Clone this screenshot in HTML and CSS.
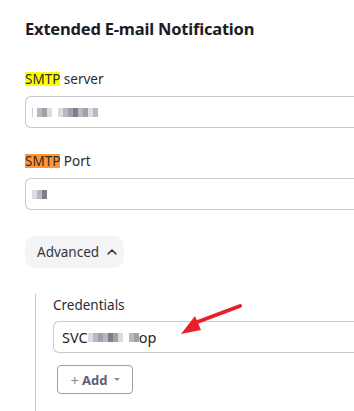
FILE: index.html
```html
<!DOCTYPE html>
<html>
<head>
<meta charset="utf-8">
<link rel="stylesheet" href="styles.css">
</head>
<body>
<div class="page">
  <h2 class="title">Extended E-mail Notification</h2>

  <div class="field">
    <div class="label"><span class="hl hl-yellow">SMTP</span> server</div>
    <div class="input">
      <span class="blur">
        <i class="line"></i><i class="c2"></i><i class="c3"></i><i class="c1"></i><i class="gap"></i><i class="c1"></i><i class="c2"></i><i class="c3"></i><i class="c4"></i><i class="c2"></i><i class="c3"></i><i class="c1"></i><i class="c2"></i>
      </span>
    </div>
  </div>

  <div class="field">
    <div class="label"><span class="hl hl-orange">SMTP</span> Port</div>
    <div class="input">
      <span class="blur">
        <i class="c1"></i><i class="c2"></i><i class="c4"></i>
      </span>
    </div>
  </div>

  <button class="adv">Advanced
    <svg class="chev" width="10" height="6" viewBox="0 0 10 6"><path d="M1 5 L5 1 L9 5" fill="none" stroke="#333" stroke-width="1.5" stroke-linecap="round" stroke-linejoin="round"/></svg>
  </button>

  <div class="nested">
    <div class="label">Credentials</div>
    <div class="input input-cred">SVC<span class="blur"><i class="c1"></i><i class="c2"></i><i class="c3"></i><i class="c2"></i><i class="c4"></i><i class="c3"></i><i class="c1"></i><i class="gap"></i><i class="c2"></i><i class="c3"></i></span>op</div>
    <button class="add"><span class="plus">+</span> Add <span class="caret"></span></button>
  </div>

  <svg class="arrow" width="80" height="40" viewBox="0 0 80 40">
    <path d="M70 7 L22 25" stroke="#e8202a" stroke-width="4" stroke-linecap="round" fill="none"/>
    <path d="M11 35 L25 17 L31 31 Z" fill="#e8202a"/>
  </svg>
</div>
</body>
</html>
```

FILE: styles.css
```css
html, body {
  margin: 0;
  padding: 0;
  overflow: hidden;
  background: #fff;
}
body {
  font-family: "Noto Sans", "Open Sans", sans-serif;
  color: #1f1f29;
}
.page {
  position: relative;
  padding: 17px 0 0 25px;
}
.title {
  margin: 0 0 28px 0;
  font-size: 16.5px;
  line-height: 24px;
  font-weight: 700;
  letter-spacing: -0.2px;
  color: #1c1c25;
}
.field {
  margin-bottom: 23px;
}
.label {
  font-size: 13.5px;
  line-height: 20px;
  color: #2b2b33;
  margin-bottom: 7px;
}
.hl {
  display: inline-block;
  line-height: 14px;
  height: 14px;
}
.hl-yellow { background: #ffff00; }
.hl-orange { background: #ff9632; }
.input {
  box-sizing: border-box;
  height: 32px;
  border: 1px solid #c5cbd2;
  border-right: 0;
  border-radius: 6px 0 0 6px;
  padding: 0 6px;
  display: flex;
  align-items: center;
  font-size: 13.5px;
  color: #222;
}
.input-cred {
  font-size: 14.5px;
  padding: 0 8px;
  color: #1f1f25;
}
.blur {
  display: inline-flex;
  align-items: center;
  height: 10px;
}
.blur i {
  display: inline-block;
  width: 5px;
  height: 9px;
}
.blur .line { width: 1px; background: #d0d0d4; margin-right: 4px; }
.blur .c1 { background: #dcdce0; }
.blur .c2 { background: #b8b8be; }
.blur .c3 { background: #a0a0a8; }
.blur .c4 { background: #7e7e86; }
.blur .gap { background: transparent; width: 6px; }
.adv {
  display: flex;
  align-items: center;
  gap: 8px;
  margin-top: 26px;
  height: 32px;
  width: 99px;
  box-sizing: border-box;
  padding: 0 0 0 12px;
  border: none;
  border-radius: 10px;
  background: #f4f4f6;
  font-family: inherit;
  font-size: 13.5px;
  color: #33333b;
}
.chev { margin-top: -1px; }
.nested {
  margin: 26px 0 0 10px;
  border-left: 1.5px solid #c8c8cc;
  padding: 1px 0 20px 17px;
}
.nested .label { margin-bottom: 6px; }
.add {
  margin: 12px 0 0 4px;
  height: 29px;
  width: 76px;
  box-sizing: border-box;
  border: 1px solid #9aa0aa;
  border-radius: 4px;
  background: #fff;
  font-family: inherit;
  font-size: 13px;
  font-weight: 700;
  color: #5d6078;
  display: flex;
  align-items: center;
  justify-content: center;
  gap: 3px;
}
.plus { font-weight: 400; color: #8a8c99; font-size: 15px; }
.caret {
  width: 0; height: 0;
  border-left: 3px solid transparent;
  border-right: 3px solid transparent;
  border-top: 3px solid #8a8c99;
  margin-left: 3px;
}
.arrow {
  position: absolute;
  left: 170px;
  top: 299px;
}
```
